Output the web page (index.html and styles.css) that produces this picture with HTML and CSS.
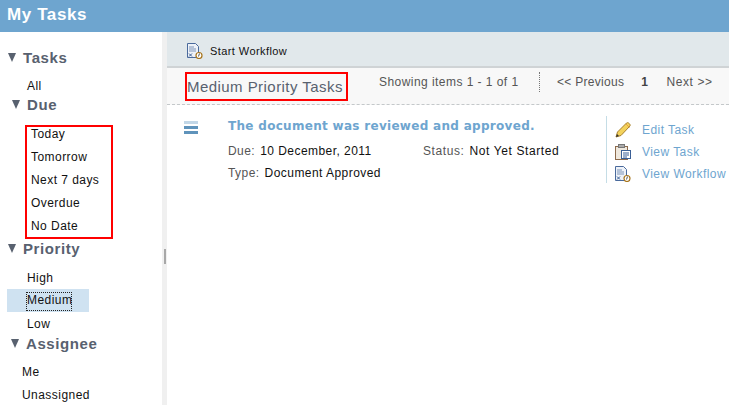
FILE: index.html
```html
<!DOCTYPE html>
<html lang="en">
<head>
  <meta charset="UTF-8">
  <title>My Tasks</title>
  <link rel="stylesheet" href="styles.css">
</head>
<body>

  <!-- Header -->
  <header class="page-title">My Tasks</header>

  <div class="columns">

    <!-- Filters -->
    <aside class="sidebar">
      <h3 class="group group-tasks"><span class="arrow"></span>Tasks</h3>
      <ul class="filters filters-tasks">
        <li>All</li>
      </ul>
      <h3 class="group group-due"><span class="arrow"></span>Due</h3>
      <ul class="filters filters-due">
        <li>Today</li>
        <li>Tomorrow</li>
        <li>Next 7 days</li>
        <li>Overdue</li>
        <li>No Date</li>
      </ul>
      <h3 class="group group-priority"><span class="arrow"></span>Priority</h3>
      <ul class="filters filters-priority">
        <li>High</li>
        <li class="selected"><span class="focus">Medium</span></li>
        <li>Low</li>
      </ul>
      <h3 class="group group-assignee"><span class="arrow"></span>Assignee</h3>
      <ul class="filters filters-assignee">
        <li>Me</li>
        <li>Unassigned</li>
      </ul>
    </aside>

    <div class="gutter"><span class="handle"></span></div>

    <main class="content">
      <div class="toolbar">
        <svg class="icon" viewBox="0 0 16 16"><use href="#workflow"/></svg>
        <span>Start Workflow</span>
      </div>

      <div class="list-bar">
        <h2 class="list-title">Medium Priority Tasks</h2>
        <div class="paging">
          <span class="showing">Showing items 1 - 1 of 1</span>
          <span class="prev">&lt;&lt; Previous</span>
          <b class="page-no">1</b>
          <span class="next">Next &gt;&gt;</span>
        </div>
      </div>

      <div class="task">
        <div class="priority-mark"><i></i><i></i><i></i></div>
        <div class="task-body">
          <a class="task-name">The document was reviewed and approved.</a>
          <div class="task-meta">
            <div class="meta-col">
              <div class="meta-row"><span class="key">Due:</span>10 December, 2011</div>
              <div class="meta-row"><span class="key">Type:</span>Document Approved</div>
            </div>
            <div class="meta-col meta-status">
              <div class="meta-row"><span class="key">Status:</span>Not Yet Started</div>
            </div>
          </div>
        </div>
        <div class="task-actions">
          <a class="action">
            <svg class="icon" viewBox="0 0 16 16">
              <path d="M1 15l1.500-5L11.500 1c1-.6 1.800-.4 2.800.6s1.100 1.800.5 2.600L6 13.500z" fill="#f3d25c" stroke="#a8802c"/>
              <path d="M11 2l3.500 3.500" stroke="#e8a040"/>
              <path d="M1 15l1-3 2 2z" fill="#333"/>
            </svg>
            Edit Task
          </a>
          <a class="action">
            <svg class="icon" viewBox="0 0 16 16">
              <rect x="0.500" y="2.500" width="12" height="13" fill="#efe8dd" stroke="#8d6b4c"/>
              <rect x="3.500" y="0.500" width="6" height="3" fill="#aaa" stroke="#777"/>
              <rect x="6.500" y="6.500" width="9" height="8" fill="#fff" stroke="#3a5f96"/>
              <path d="M8 9h6M8 11h6M8 13h4" stroke="#3a5f96"/>
            </svg>
            View Task
          </a>
          <a class="action">
            <svg class="icon" viewBox="0 0 16 16"><use href="#workflow"/></svg>
            View Workflow
          </a>
        </div>
      </div>
    </main>
  </div>

  <!-- Shared icon -->
  <svg class="defs" width="0" height="0">
    <symbol id="workflow" viewBox="0 0 16 16">
      <path d="M0.500.5h8l3 3v11h-11z" fill="#eef2f8" stroke="#4a6a9c"/>
      <path d="M2 4h5M2 6h7M2 8h7" stroke="#7d94b8"/>
      <path d="M2 10.500l3 3M5 10.500l-3 3" stroke="#3a5f96"/>
      <circle cx="12" cy="12.500" r="3" fill="#fff" stroke="#a8761e" stroke-width="1.200"/>
      <path d="M12.500 10.500l-1 3" stroke="#555"/>
    </symbol>
  </svg>

</body>
</html>
```

FILE: styles.css
```css
* {
  margin: 0;
  padding: 0;
  box-sizing: border-box;
}

body {
  font-family: 'Liberation Sans', Arial, sans-serif;
  font-size: 12px;
  letter-spacing: 0.45px;
  background: #fff;
  color: #111;
  height: 410px;
  overflow: hidden;
}

ul {
  list-style: none;
}

.defs {
  position: absolute;
}

.page-title {
  height: 32px;
  padding: 6px 0 0 7px;
  background: #6ea5cf;
  color: #fff;
  font-size: 17px;
  font-weight: bold;
  line-height: 18px;
  letter-spacing: 0.6px;
}

.columns {
  display: flex;
  height: 373px;
}

/* Sidebar */
.sidebar {
  width: 162px;
  flex: none;
  padding-top: 16px;
}

.group {
  display: flex;
  align-items: center;
  height: 18px;
  font-size: 15px;
  font-weight: bold;
  color: #58616f;
  letter-spacing: 0.6px;
}

.arrow {
  width: 0;
  height: 0;
  margin-right: 7px;
  border-left: 4.5px solid transparent;
  border-right: 4.5px solid transparent;
  border-top: 9px solid #58616f;
}

.group-tasks,
.group-priority {
  padding-left: 8px;
}

.group-due {
  padding-left: 12px;
}

.group-assignee {
  padding-left: 11px;
}

.filters li {
  height: 23px;
  line-height: 23px;
}

.filters-tasks {
  padding: 11px 0 0 27px;
}

.filters-tasks li {
  height: 18px;
  line-height: 18px;
}

.filters-due {
  width: 88px;
  height: 114px;
  margin: 12px 0 0 25px;
  border: 2px solid #f00;
  padding-left: 4px;
}

.filters-due li:first-child {
  margin-top: -4px;
}

.filters-priority {
  height: 77px;
  padding: 10px 0 0 27px;
}

.filters-priority .selected {
  width: 82px;
  margin: -1px 0 1px -20px;
  padding-left: 20px;
  background: #cfe2f1;
}

.focus {
  display: inline-block;
  height: 19px;
  line-height: 17px;
  margin-left: -1px;
  padding: 0 0 0 1px;
  outline: 1px dotted #222;
  outline-offset: -1px;
}

.filters-assignee {
  padding: 9px 0 0 22px;
}

/* Splitter */
.gutter {
  width: 5px;
  flex: none;
  display: flex;
  align-items: center;
  background: #f0f0f0;
}

.handle {
  width: 2px;
  height: 15px;
  margin: 75px 0 0 2px;
  background: #a8a8a8;
}

/* Main */
.content {
  flex: 1;
  min-width: 0;
}

.toolbar {
  display: flex;
  align-items: center;
  gap: 7px;
  height: 36px;
  padding: 3px 0 0 20px;
  background: #e1e8eb;
  border-bottom: 2px solid #cfd3d5;
  font-size: 11px;
  letter-spacing: 0.42px;
}

.icon {
  width: 16px;
  height: 16px;
  flex: none;
}

.list-bar {
  display: flex;
  height: 37px;
  padding: 4px 0 0 18px;
  background: #f8f8f8;
  border-bottom: 1px dashed #c4c8ca;
}

.list-title {
  width: 163px;
  height: 29px;
  border: 2px solid #f00;
  font-size: 15px;
  font-weight: normal;
  line-height: 26px;
  letter-spacing: 0.45px;
  color: #58616f;
  white-space: nowrap;
}

.paging {
  display: flex;
  align-items: center;
  height: 20px;
  margin-left: 31px;
  color: #555;
}

.showing {
  width: 161px;
  height: 20px;
  line-height: 20px;
  border-right: 1px dotted #777;
}

.prev {
  margin-left: 17px;
  letter-spacing: 0.3px;
}

.page-no {
  margin: 0 18px 0 17px;
  color: #444;
}

.next {
  letter-spacing: 0.6px;
}

.task {
  display: flex;
  padding-top: 11px;
}

.priority-mark {
  width: 61px;
  padding: 5px 0 0 17px;
  flex: none;
}

.priority-mark i {
  display: block;
  width: 14px;
  height: 3px;
  margin-bottom: 2px;
  background: #5f93bb;
}

.priority-mark i:first-child {
  background: #c2d7e7;
}

.task-name {
  display: block;
  height: 24px;
  font-family: 'DejaVu Sans', Verdana, sans-serif;
  font-size: 12px;
  font-weight: bold;
  line-height: 21px;
  color: #6ea5cf;
  letter-spacing: 0.3px;
  white-space: nowrap;
}

.task-body {
  width: 378px;
  flex: none;
}

.task-meta {
  display: flex;
}

.meta-col {
  width: 195px;
}

.meta-status {
  width: 183px;
  letter-spacing: 0.6px;
}

.meta-row {
  height: 22px;
  line-height: 22px;
  white-space: nowrap;
}

.key {
  margin-right: 5px;
  color: #555;
}

.task-actions {
  width: 124px;
  height: 67px;
  padding: 3px 0 0 8px;
  border-left: 1px solid #c5dde6;
  color: #6ea5cf;
  white-space: nowrap;
}

.action {
  display: flex;
  align-items: center;
  gap: 11px;
  height: 22px;
}
```
